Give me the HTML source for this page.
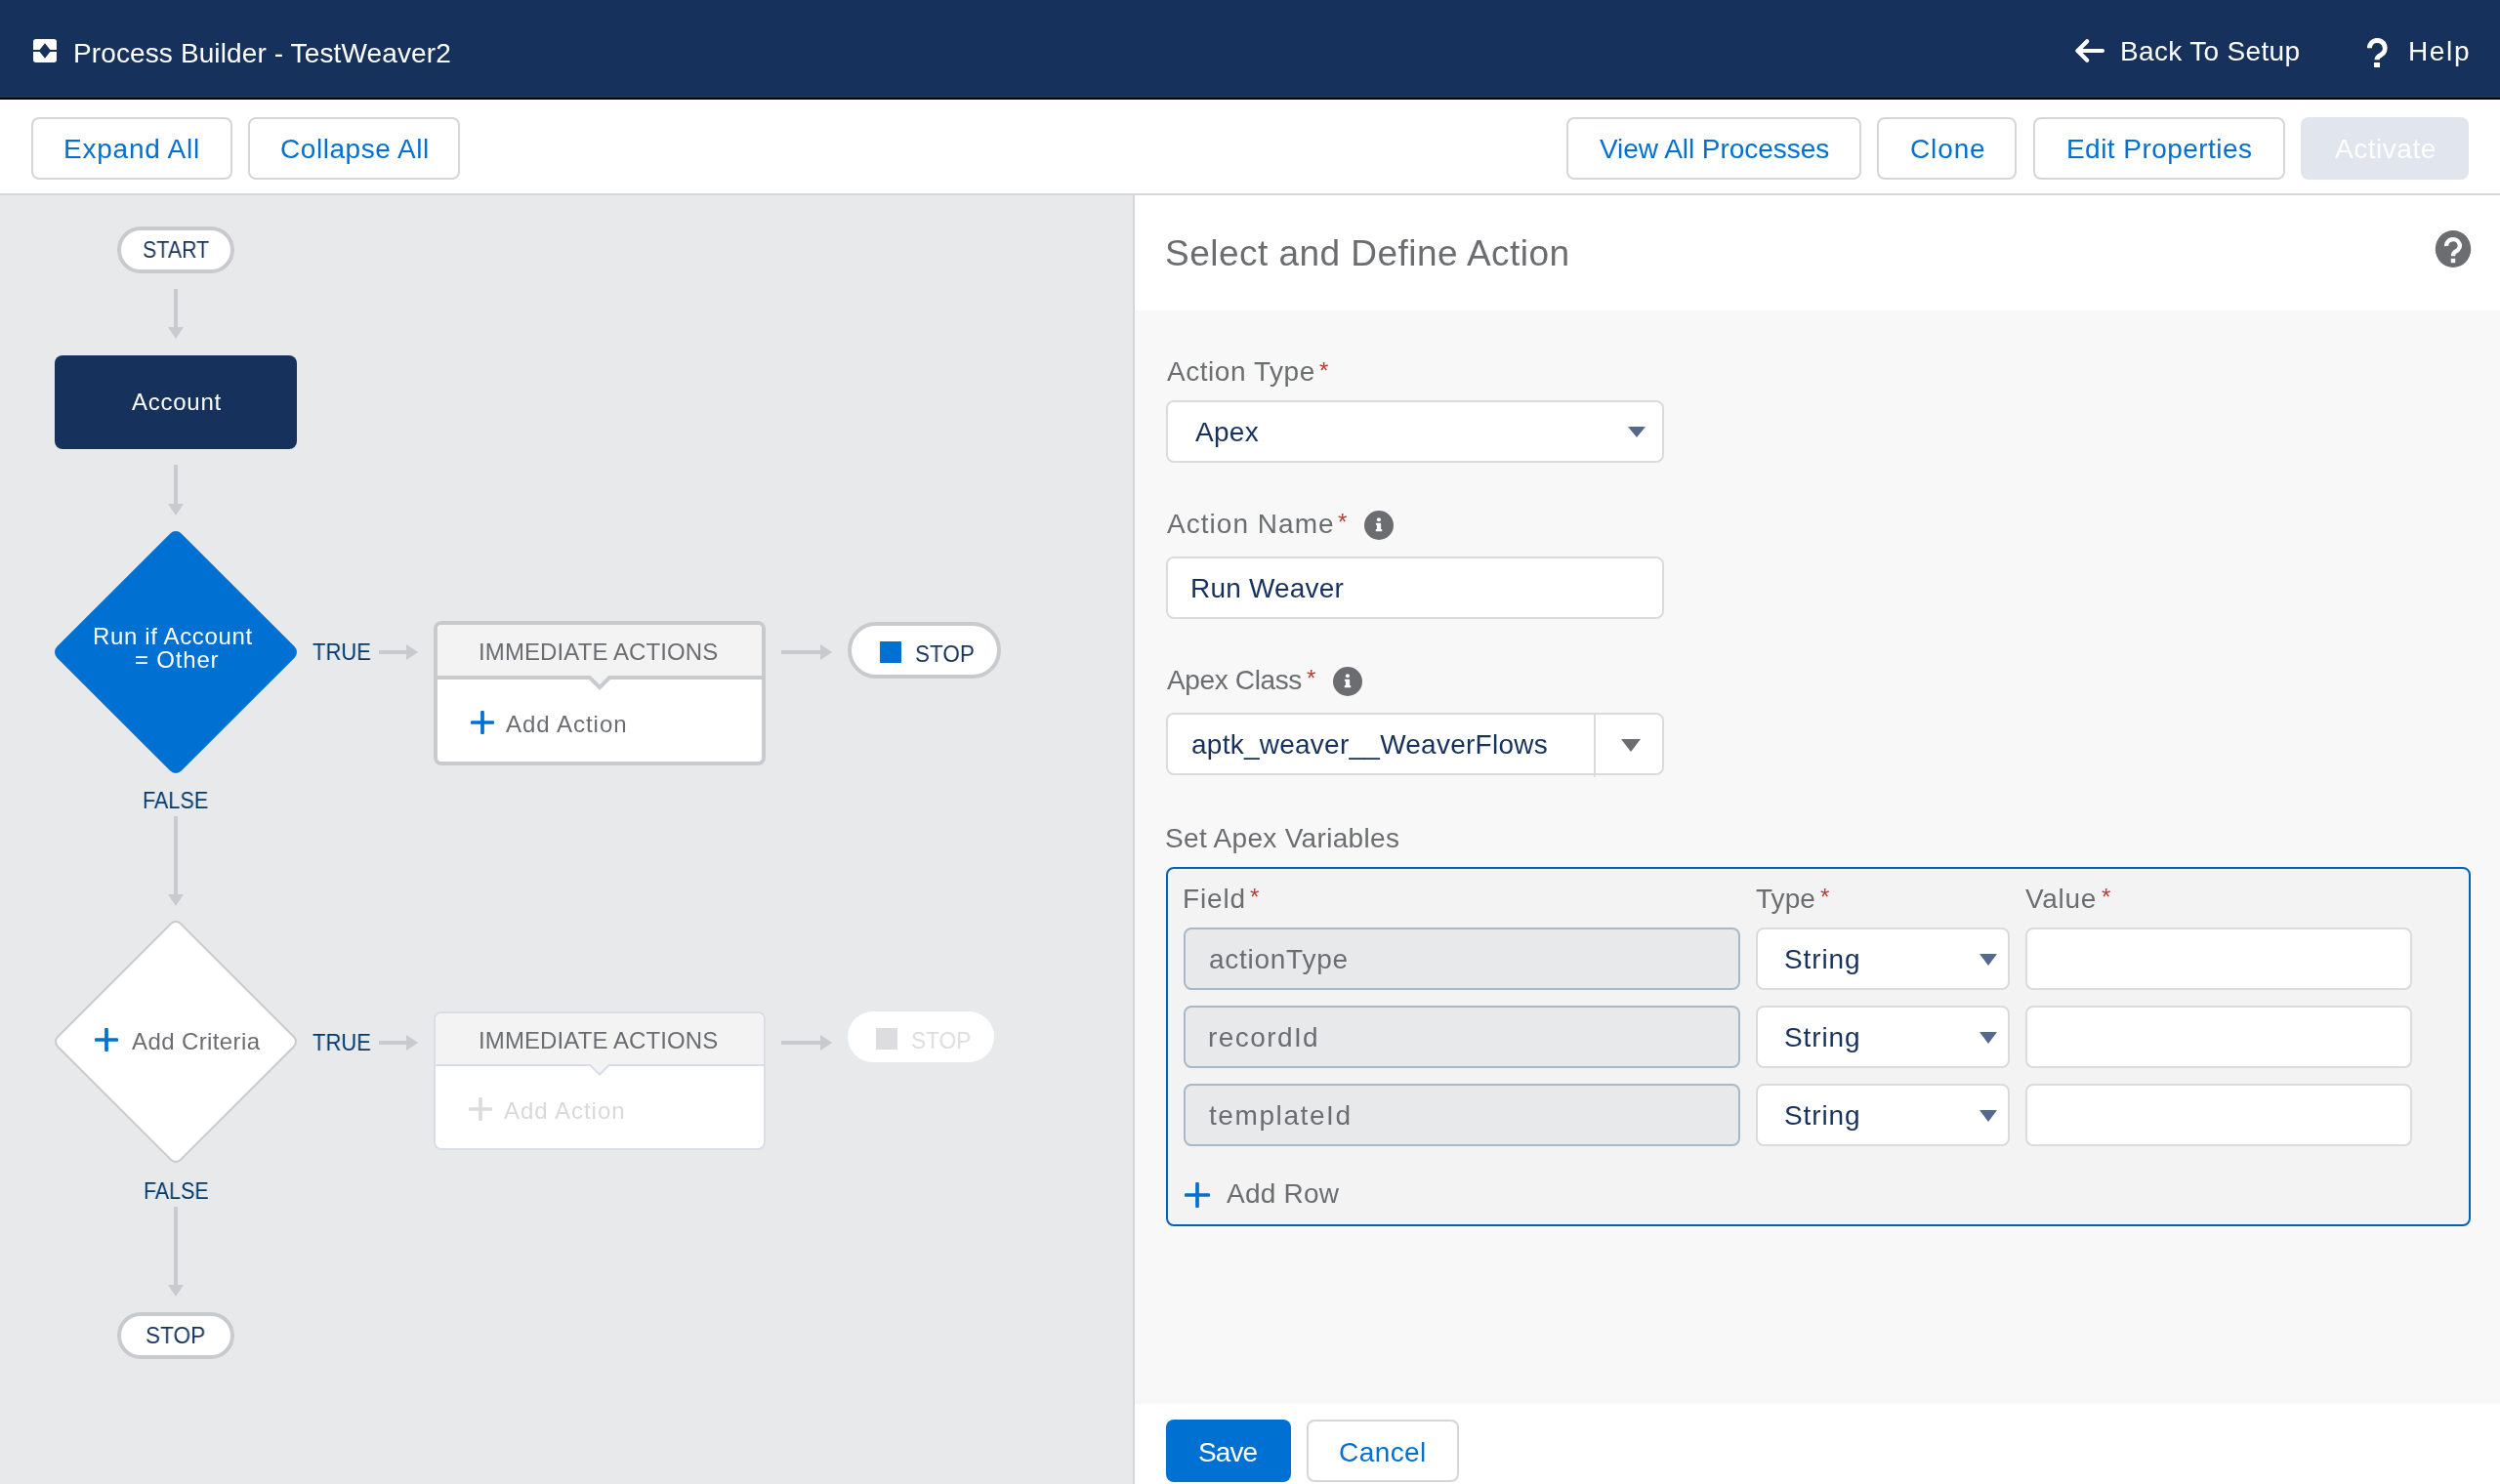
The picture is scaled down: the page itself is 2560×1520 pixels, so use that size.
<!DOCTYPE html>
<html><head><meta charset="utf-8"><title>Process Builder - TestWeaver2</title>
<style>
html,body{margin:0;padding:0;}
body{width:2560px;height:1520px;overflow:hidden;position:relative;background:#fff;font-family:"Liberation Sans",sans-serif;}
.t{position:absolute;white-space:nowrap;will-change:transform;}
.b{position:absolute;}
</style></head><body>
<div class="b" style="left:0px;top:0px;width:2560px;height:100px;background:#16325c;"></div>
<div class="b" style="left:0px;top:100px;width:2560px;height:2px;background:#000;"></div>
<svg class="b" style="left:34px;top:40px" width="24" height="24" viewBox="0 0 24 24">
<rect x="0" y="0" width="24" height="24" rx="3" fill="#fff"/>
<rect x="0" y="11" width="24" height="2" fill="#16325c"/>
<path d="M12 4.2 L18.2 12 L12 19.8 L5.8 12 Z" fill="#16325c"/>
</svg>
<div class="t" style="left:74.70px;top:41.00px;font-size:28px;line-height:28px;color:#fff;letter-spacing:0.120px;">Process Builder - TestWeaver2</div>
<svg class="b" style="left:2121px;top:36px" width="38" height="32" viewBox="0 0 38 32">
<path d="M16.2 6.3 L6.5 16 L16.2 25.7" fill="none" stroke="#fff" stroke-width="4.2" stroke-linecap="round" stroke-linejoin="round"/>
<path d="M6.5 16 L32 16" fill="none" stroke="#fff" stroke-width="4" stroke-linecap="round"/>
</svg>
<div class="t" style="left:2171.20px;top:39.00px;font-size:28px;line-height:28px;color:#fff;letter-spacing:0.328px;">Back To Setup</div>
<svg class="b" style="left:2420px;top:36px" width="28" height="36" viewBox="0 0 28 36">
<path d="M6.4 13.3 A7.9 7.9 0 1 1 18.2 20.2 C15.4 21.5 14 22.6 14 25.2" fill="none" stroke="#fff" stroke-width="5"/>
<rect x="11" y="28" width="6" height="5" fill="#fff"/>
</svg>
<div class="t" style="left:2465.70px;top:39.00px;font-size:28px;line-height:28px;color:#fff;letter-spacing:1.625px;">Help</div>
<div class="b" style="left:0px;top:102px;width:2560px;height:96px;background:#fff;"></div>
<div class="b" style="left:0px;top:198px;width:2560px;height:2px;background:#d4d6d9;"></div>
<div class="b" style="left:32px;top:120px;width:206px;height:64px;background:#fff;border:2px solid #d4d6d9;border-radius:8px;box-sizing:border-box;"></div>
<div class="t" style="left:65.30px;top:139.00px;font-size:28px;line-height:28px;color:#0070d2;letter-spacing:0.764px;">Expand All</div>
<div class="b" style="left:254px;top:120px;width:217px;height:64px;background:#fff;border:2px solid #d4d6d9;border-radius:8px;box-sizing:border-box;"></div>
<div class="t" style="left:286.57px;top:139.00px;font-size:28px;line-height:28px;color:#0070d2;letter-spacing:0.546px;">Collapse All</div>
<div class="b" style="left:1604px;top:120px;width:302px;height:64px;background:#fff;border:2px solid #d4d6d9;border-radius:8px;box-sizing:border-box;"></div>
<div class="t" style="left:1637.86px;top:139.00px;font-size:28px;line-height:28px;color:#0070d2;letter-spacing:-0.052px;">View All Processes</div>
<div class="b" style="left:1922px;top:120px;width:143px;height:64px;background:#fff;border:2px solid #d4d6d9;border-radius:8px;box-sizing:border-box;"></div>
<div class="t" style="left:1956.07px;top:139.00px;font-size:28px;line-height:28px;color:#0070d2;letter-spacing:0.874px;">Clone</div>
<div class="b" style="left:2082px;top:120px;width:258px;height:64px;background:#fff;border:2px solid #d4d6d9;border-radius:8px;box-sizing:border-box;"></div>
<div class="t" style="left:2116.10px;top:139.00px;font-size:28px;line-height:28px;color:#0070d2;letter-spacing:0.447px;">Edit Properties</div>
<div class="b" style="left:2356px;top:120px;width:172px;height:64px;background:#e0e5ee;border-radius:8px;"></div>
<div class="t" style="left:2390.64px;top:139.00px;font-size:28px;line-height:28px;color:#fff;letter-spacing:0.527px;">Activate</div>
<div class="b" style="left:0px;top:200px;width:1160px;height:1320px;background:#e8e9eb;"></div>
<div class="b" style="left:120px;top:232px;width:120px;height:48px;background:#fff;border:4px solid #c8cacd;border-radius:24px;box-sizing:border-box;"></div>
<div class="t" style="left:145.82px;top:244.00px;font-size:24px;line-height:24px;color:#16325c;transform:scaleX(0.8916);transform-origin:0 0;">START</div>
<div class="b" style="left:178px;top:296px;width:4px;height:40px;background:#c8cacd;"></div>
<svg class="b" style="left:172px;top:335px" width="16" height="12" viewBox="0 0 16 12"><path d="M0 0 L16 0 L8 12 Z" fill="#c8cacd"/></svg>
<div class="b" style="left:56px;top:364px;width:248px;height:96px;background:#16325c;border-radius:8px;"></div>
<div class="t" style="left:134.55px;top:400.00px;font-size:24px;line-height:24px;color:#fff;letter-spacing:0.751px;">Account</div>
<div class="b" style="left:178px;top:476px;width:4px;height:41px;background:#c8cacd;"></div>
<svg class="b" style="left:172px;top:516px" width="16" height="12" viewBox="0 0 16 12"><path d="M0 0 L16 0 L8 12 Z" fill="#c8cacd"/></svg>
<div class="b" style="left:90px;top:578px;width:180px;height:180px;background:#0070d2;border-radius:8px;transform:rotate(45deg);"></div>
<div class="t" style="left:94.53px;top:640.00px;font-size:24px;line-height:24px;color:#fff;letter-spacing:0.645px;">Run if Account</div>
<div class="t" style="left:137.62px;top:664.00px;font-size:24px;line-height:24px;color:#fff;letter-spacing:0.812px;">= Other</div>
<div class="t" style="left:319.52px;top:656.00px;font-size:24px;line-height:24px;color:#00396b;transform:scaleX(0.9174);transform-origin:0 0;">TRUE</div>
<div class="b" style="left:388px;top:666px;width:29px;height:4px;background:#c8cacd;"></div>
<svg class="b" style="left:416px;top:660px" width="12" height="16" viewBox="0 0 12 16"><path d="M0 0 L12 8 L0 16 Z" fill="#c8cacd"/></svg>
<div class="b" style="left:444px;top:636px;width:340px;height:148px;background:#fff;border:4px solid #c8cacd;border-radius:8px;box-sizing:border-box;overflow:hidden;"></div>
<div class="b" style="left:448px;top:640px;width:332px;height:52px;background:#f3f3f3;border-radius:4px 4px 0 0;"></div>
<div class="b" style="left:448px;top:692px;width:332px;height:4px;background:#c8cacd;"></div>
<svg class="b" style="left:599px;top:692px" width="30" height="16" viewBox="0 0 30 16"><path d="M0 0 L30 0 L15 15 Z" fill="#c8cacd"/><path d="M5.66 0 L24.34 0 L15 9.34 Z" fill="#f3f3f3"/></svg>
<div class="t" style="left:490.19px;top:656.00px;font-size:24px;line-height:24px;color:#6b6d70;letter-spacing:0.109px;">IMMEDIATE ACTIONS</div>
<svg class="b" style="left:482px;top:728px" width="24" height="24" viewBox="0 0 24 24"><path d="M12.0 1.5 V22.5 M1.5 12.0 H22.5" stroke="#0070d2" stroke-width="3.7" stroke-linecap="round"/></svg>
<div class="t" style="left:517.95px;top:730.00px;font-size:24px;line-height:24px;color:#6b6d70;letter-spacing:0.985px;">Add Action</div>
<div class="b" style="left:800px;top:666px;width:41px;height:4px;background:#c8cacd;"></div>
<svg class="b" style="left:840px;top:660px" width="12" height="16" viewBox="0 0 12 16"><path d="M0 0 L12 8 L0 16 Z" fill="#c8cacd"/></svg>
<div class="b" style="left:868px;top:637px;width:157px;height:58px;background:#fff;border:4px solid #c8cacd;border-radius:29px;box-sizing:border-box;"></div>
<div class="b" style="left:901px;top:657px;width:22px;height:22px;background:#0070d2;"></div>
<div class="t" style="left:936.97px;top:658.00px;font-size:24px;line-height:24px;color:#16325c;transform:scaleX(0.9369);transform-origin:0 0;">STOP</div>
<div class="t" style="left:146.23px;top:808.00px;font-size:24px;line-height:24px;color:#00396b;transform:scaleX(0.8994);transform-origin:0 0;">FALSE</div>
<div class="b" style="left:178px;top:836px;width:4px;height:81px;background:#c8cacd;"></div>
<svg class="b" style="left:172px;top:916px" width="16" height="12" viewBox="0 0 16 12"><path d="M0 0 L16 0 L8 12 Z" fill="#c8cacd"/></svg>
<div class="b" style="left:90px;top:977px;width:180px;height:180px;background:#fff;border:2px solid #c8cacd;box-sizing:border-box;border-radius:8px;transform:rotate(45deg);"></div>
<svg class="b" style="left:97px;top:1053px" width="24" height="24" viewBox="0 0 24 24"><path d="M12.0 1.5 V22.5 M1.5 12.0 H22.5" stroke="#0070d2" stroke-width="3.7" stroke-linecap="round"/></svg>
<div class="t" style="left:134.95px;top:1055.00px;font-size:24px;line-height:24px;color:#6b6d70;letter-spacing:0.393px;">Add Criteria</div>
<div class="t" style="left:319.52px;top:1056.00px;font-size:24px;line-height:24px;color:#00396b;transform:scaleX(0.9174);transform-origin:0 0;">TRUE</div>
<div class="b" style="left:388px;top:1066px;width:29px;height:4px;background:#c8cacd;"></div>
<svg class="b" style="left:416px;top:1060px" width="12" height="16" viewBox="0 0 12 16"><path d="M0 0 L12 8 L0 16 Z" fill="#c8cacd"/></svg>
<div class="b" style="left:444px;top:1036px;width:340px;height:142px;background:#fff;border:2px solid #d8dde6;border-radius:8px;box-sizing:border-box;"></div>
<div class="b" style="left:446px;top:1038px;width:336px;height:52px;background:#f3f3f3;border-radius:6px 6px 0 0;"></div>
<div class="b" style="left:446px;top:1090px;width:336px;height:2px;background:#d8dde6;"></div>
<svg class="b" style="left:602px;top:1090px" width="24" height="13" viewBox="0 0 24 13"><path d="M0 0 L24 0 L12 12 Z" fill="#d8dde6"/><path d="M2.83 0 L21.17 0 L12 9.17 Z" fill="#f3f3f3"/></svg>
<div class="t" style="left:490.19px;top:1054.00px;font-size:24px;line-height:24px;color:#6b6d70;letter-spacing:0.109px;">IMMEDIATE ACTIONS</div>
<svg class="b" style="left:480px;top:1124px" width="24" height="24" viewBox="0 0 24 24"><path d="M12.0 1.5 V22.5 M1.5 12.0 H22.5" stroke="#dcdcdc" stroke-width="3.7" stroke-linecap="round"/></svg>
<div class="t" style="left:515.95px;top:1126.00px;font-size:24px;line-height:24px;color:#d9d9d9;letter-spacing:0.985px;">Add Action</div>
<div class="b" style="left:800px;top:1066px;width:41px;height:4px;background:#c8cacd;"></div>
<svg class="b" style="left:840px;top:1060px" width="12" height="16" viewBox="0 0 12 16"><path d="M0 0 L12 8 L0 16 Z" fill="#c8cacd"/></svg>
<div class="b" style="left:868px;top:1036px;width:150px;height:52px;background:#fff;border-radius:26px;"></div>
<div class="b" style="left:897px;top:1053px;width:22px;height:22px;background:#dddddf;"></div>
<div class="t" style="left:932.96px;top:1054.00px;font-size:24px;line-height:24px;color:#dddddf;transform:scaleX(0.9433);transform-origin:0 0;">STOP</div>
<div class="t" style="left:146.74px;top:1208.00px;font-size:24px;line-height:24px;color:#00396b;transform:scaleX(0.8925);transform-origin:0 0;">FALSE</div>
<div class="b" style="left:178px;top:1236px;width:4px;height:81px;background:#c8cacd;"></div>
<svg class="b" style="left:172px;top:1316px" width="16" height="12" viewBox="0 0 16 12"><path d="M0 0 L16 0 L8 12 Z" fill="#c8cacd"/></svg>
<div class="b" style="left:120px;top:1344px;width:120px;height:48px;background:#fff;border:4px solid #c8cacd;border-radius:24px;box-sizing:border-box;"></div>
<div class="t" style="left:149.46px;top:1356.00px;font-size:24px;line-height:24px;color:#16325c;transform:scaleX(0.9433);transform-origin:0 0;">STOP</div>
<div class="b" style="left:1160px;top:200px;width:1400px;height:1320px;background:#fff;"></div>
<div class="b" style="left:1160px;top:200px;width:2px;height:1320px;background:#d4d6d9;"></div>
<div class="b" style="left:1162px;top:318px;width:1398px;height:1120px;background:#f8f8f8;"></div>
<div class="t" style="left:1193.00px;top:241.00px;font-size:37px;line-height:37px;color:#6b6d70;letter-spacing:0.476px;">Select and Define Action</div>
<svg class="b" style="left:2493px;top:236px" width="38" height="38" viewBox="0 0 38 38">
<ellipse cx="19" cy="19" rx="18.2" ry="19" fill="#6b6d70"/>
<path d="M12.2 16 A6.8 6.4 0 1 1 21.8 21.4 C19.8 22.4 19 23.4 19 26.2" fill="none" stroke="#fff" stroke-width="4.4"/>
<rect x="16.8" y="28.8" width="4.4" height="4.4" fill="#fff"/>
</svg>
<div class="t" style="left:1194.64px;top:367.00px;font-size:28px;line-height:28px;color:#6b6d70;letter-spacing:0.549px;">Action Type</div>
<div class="t" style="left:1351.12px;top:368.00px;font-size:24px;line-height:24px;color:#c23934;">*</div>
<div class="b" style="left:1194px;top:410px;width:510px;height:64px;background:#fff;border:2px solid #d9dbdd;border-radius:8px;box-sizing:border-box;"></div>
<div class="t" style="left:1223.94px;top:429.00px;font-size:28px;line-height:28px;color:#16325c;letter-spacing:0.284px;">Apex</div>
<svg class="b" style="left:1667px;top:437px" width="18" height="11" viewBox="0 0 18 11"><path d="M0 0 L18 0 L9 11 Z" fill="#54698d"/></svg>
<div class="t" style="left:1194.64px;top:523.00px;font-size:28px;line-height:28px;color:#6b6d70;letter-spacing:1.032px;">Action Name</div>
<div class="t" style="left:1370.12px;top:523.00px;font-size:24px;line-height:24px;color:#c23934;">*</div>
<svg class="b" style="left:1397px;top:523px" width="30" height="30" viewBox="0 0 30 30">
<circle cx="15" cy="15" r="15" fill="#6b6d70"/>
<circle cx="14.9" cy="9.3" r="2.05" fill="#fff"/>
<path d="M11.9 12.7 H17.1 V19 H18.2 V21.2 H11.8 V19 H12.9 V14.7 H11.9 Z" fill="#fff"/>
</svg>
<div class="b" style="left:1194px;top:570px;width:510px;height:64px;background:#fff;border:2px solid #d9dbdd;border-radius:8px;box-sizing:border-box;"></div>
<div class="t" style="left:1218.70px;top:589.00px;font-size:28px;line-height:28px;color:#16325c;letter-spacing:0.184px;">Run Weaver</div>
<div class="t" style="left:1194.64px;top:683.00px;font-size:28px;line-height:28px;color:#6b6d70;letter-spacing:-0.362px;">Apex Class</div>
<div class="t" style="left:1338.32px;top:683.00px;font-size:24px;line-height:24px;color:#c23934;">*</div>
<svg class="b" style="left:1365px;top:683px" width="30" height="30" viewBox="0 0 30 30">
<circle cx="15" cy="15" r="15" fill="#6b6d70"/>
<circle cx="14.9" cy="9.3" r="2.05" fill="#fff"/>
<path d="M11.9 12.7 H17.1 V19 H18.2 V21.2 H11.8 V19 H12.9 V14.7 H11.9 Z" fill="#fff"/>
</svg>
<div class="b" style="left:1194px;top:730px;width:510px;height:64px;background:#fff;border:2px solid #d9dbdd;border-radius:8px;box-sizing:border-box;"></div>
<div class="b" style="left:1632px;top:730px;width:2px;height:66px;background:#d9dbdd;"></div>
<div class="t" style="left:1219.82px;top:749.00px;font-size:28px;line-height:28px;color:#16325c;letter-spacing:0.248px;">aptk_weaver__WeaverFlows</div>
<svg class="b" style="left:1660px;top:757px" width="20" height="13" viewBox="0 0 20 13"><path d="M0 0 L20 0 L10 13 Z" fill="#6b6d70"/></svg>
<div class="t" style="left:1193.11px;top:845.00px;font-size:28px;line-height:28px;color:#6b6d70;letter-spacing:0.316px;">Set Apex Variables</div>
<div class="b" style="left:1194px;top:888px;width:1336px;height:368px;background:#f3f3f3;border:2px solid #0063b9;border-radius:8px;box-sizing:border-box;"></div>
<div class="t" style="left:1210.70px;top:907.00px;font-size:28px;line-height:28px;color:#6b6d70;letter-spacing:0.853px;">Field</div>
<div class="t" style="left:1279.62px;top:907.00px;font-size:24px;line-height:24px;color:#c23934;">*</div>
<div class="t" style="left:1797.78px;top:907.00px;font-size:28px;line-height:28px;color:#6b6d70;letter-spacing:0.048px;">Type</div>
<div class="t" style="left:1863.62px;top:907.00px;font-size:24px;line-height:24px;color:#c23934;">*</div>
<div class="t" style="left:2073.86px;top:907.00px;font-size:28px;line-height:28px;color:#6b6d70;letter-spacing:0.712px;">Value</div>
<div class="t" style="left:2151.62px;top:907.00px;font-size:24px;line-height:24px;color:#c23934;">*</div>
<div class="b" style="left:1212px;top:950px;width:570px;height:64px;background:#e8e9eb;border:2px solid #a9b8c9;border-radius:8px;box-sizing:border-box;"></div>
<div class="t" style="left:1237.62px;top:969.00px;font-size:28px;line-height:28px;color:#6b6d70;letter-spacing:0.733px;">actionType</div>
<div class="b" style="left:1798px;top:950px;width:260px;height:64px;background:#fff;border:2px solid #d9dbdd;border-radius:8px;box-sizing:border-box;"></div>
<div class="t" style="left:1827.31px;top:969.00px;font-size:28px;line-height:28px;color:#16325c;letter-spacing:0.869px;">String</div>
<svg class="b" style="left:2027px;top:977px" width="18" height="12" viewBox="0 0 18 12"><path d="M0 0 L18 0 L9 12 Z" fill="#54698d"/></svg>
<div class="b" style="left:2074px;top:950px;width:396px;height:64px;background:#fff;border:2px solid #d9dbdd;border-radius:8px;box-sizing:border-box;"></div>
<div class="b" style="left:1212px;top:1030px;width:570px;height:64px;background:#e8e9eb;border:2px solid #a9b8c9;border-radius:8px;box-sizing:border-box;"></div>
<div class="t" style="left:1236.95px;top:1049.00px;font-size:28px;line-height:28px;color:#6b6d70;letter-spacing:1.419px;">recordId</div>
<div class="b" style="left:1798px;top:1030px;width:260px;height:64px;background:#fff;border:2px solid #d9dbdd;border-radius:8px;box-sizing:border-box;"></div>
<div class="t" style="left:1827.31px;top:1049.00px;font-size:28px;line-height:28px;color:#16325c;letter-spacing:0.869px;">String</div>
<svg class="b" style="left:2027px;top:1057px" width="18" height="12" viewBox="0 0 18 12"><path d="M0 0 L18 0 L9 12 Z" fill="#54698d"/></svg>
<div class="b" style="left:2074px;top:1030px;width:396px;height:64px;background:#fff;border:2px solid #d9dbdd;border-radius:8px;box-sizing:border-box;"></div>
<div class="b" style="left:1212px;top:1110px;width:570px;height:64px;background:#e8e9eb;border:2px solid #a9b8c9;border-radius:8px;box-sizing:border-box;"></div>
<div class="t" style="left:1238.38px;top:1129.00px;font-size:28px;line-height:28px;color:#6b6d70;letter-spacing:1.587px;">templateId</div>
<div class="b" style="left:1798px;top:1110px;width:260px;height:64px;background:#fff;border:2px solid #d9dbdd;border-radius:8px;box-sizing:border-box;"></div>
<div class="t" style="left:1827.31px;top:1129.00px;font-size:28px;line-height:28px;color:#16325c;letter-spacing:0.869px;">String</div>
<svg class="b" style="left:2027px;top:1137px" width="18" height="12" viewBox="0 0 18 12"><path d="M0 0 L18 0 L9 12 Z" fill="#54698d"/></svg>
<div class="b" style="left:2074px;top:1110px;width:396px;height:64px;background:#fff;border:2px solid #d9dbdd;border-radius:8px;box-sizing:border-box;"></div>
<svg class="b" style="left:1213px;top:1211px" width="26" height="26" viewBox="0 0 26 26"><path d="M13.0 1.5 V24.5 M1.5 13.0 H24.5" stroke="#0070d2" stroke-width="3.7" stroke-linecap="round"/></svg>
<div class="t" style="left:1256.44px;top:1209.00px;font-size:28px;line-height:28px;color:#6b6d70;letter-spacing:0.234px;">Add Row</div>
<div class="b" style="left:1194px;top:1454px;width:128px;height:64px;background:#0070d2;border-radius:8px;"></div>
<div class="t" style="left:1226.71px;top:1474.00px;font-size:28px;line-height:28px;color:#fff;letter-spacing:-0.897px;">Save</div>
<div class="b" style="left:1338px;top:1454px;width:156px;height:64px;background:#fff;border:2px solid #d4d6d9;border-radius:8px;box-sizing:border-box;"></div>
<div class="t" style="left:1370.97px;top:1474.00px;font-size:28px;line-height:28px;color:#0070d2;letter-spacing:0.428px;">Cancel</div>
</body></html>
